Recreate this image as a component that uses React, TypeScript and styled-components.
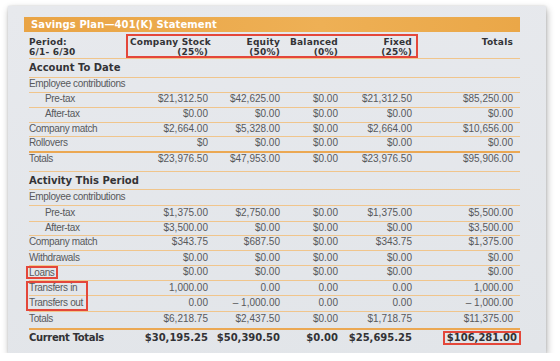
import React from "react";
import styled, { createGlobalStyle } from "styled-components";

const GlobalStyle = createGlobalStyle`
  html, body { margin: 0; padding: 0; background: #ffffff; }
  * { box-sizing: border-box; }
`;

const HEAVY = `"DejaVu Sans", "Liberation Sans", sans-serif`;
const PLAIN = `"Liberation Sans", Arial, sans-serif`;
const RED = "#e4473a";
const COLS = "101px 78px 72px 58px 74px 101px";

const Page = styled.div`
  padding: 6px 0 0 8px;
`;

const Card = styled.div`
  width: 538px;
  height: 347px;
  padding: 11px 26px 0 16px;
  background: linear-gradient(175deg, #e7e9ed 0%, #e2e5e9 100%);
  box-shadow: 1px 3px 7px rgba(0, 0, 0, 0.3), 0 0 2px rgba(0, 0, 0, 0.12);
`;

const TitleBar = styled.div`
  height: 15px;
  line-height: 15px;
  padding-left: 7px;
  background: linear-gradient(90deg, #e9a445 0%, #eeb055 60%, #eaa748 100%);
  color: #ffffff;
  font-family: ${HEAVY};
  font-weight: 700;
  font-size: 10px;
  letter-spacing: 0.1px;
  white-space: nowrap;
`;

const Table = styled.div`
  margin-left: 5px;
  width: 491px;
`;

const Header = styled.div`
  position: relative;
  display: grid;
  grid-template-columns: ${COLS};
  padding: 5px 0 1px;
  border-bottom: 1px solid #f0c58c;
  font-family: ${HEAVY};
  font-weight: 700;
  font-size: 9px;
  line-height: 10px;
  color: #333336;
`;

const HeadCell = styled.div<{ $left?: boolean }>`
  text-align: ${(p) => (p.$left ? "left" : "right")};
  white-space: nowrap;
  letter-spacing: 0.2px;
`;

const HeaderMark = styled.div`
  position: absolute;
  left: 97px;
  top: 2px;
  width: 292px;
  height: 24px;
  border: 2px solid ${RED};
`;

const Section = styled.div<{ $h: number }>`
  height: ${(p) => p.$h + 1}px;
  line-height: ${(p) => p.$h}px;
  border-bottom: 1px solid #f0c58c;
  font-family: ${HEAVY};
  font-weight: 700;
  font-size: 10px;
  color: #333336;
`;

const Row = styled.div<{ $h: number; $pt: number; $thick?: boolean }>`
  display: grid;
  grid-template-columns: ${COLS};
  align-items: start;
  height: ${(p) => p.$h + (p.$thick ? 2 : 1)}px;
  padding-top: ${(p) => p.$pt}px;
  border-bottom: ${(p) => (p.$thick ? "2px solid #eba853" : "1px solid #f0c58c")};
  font-family: ${PLAIN};
  font-size: 10px;
  line-height: 12px;
  color: #58595c;
`;

const Label = styled.div<{ $indent?: boolean }>`
  padding-left: ${(p) => (p.$indent ? 16 : 0)}px;
  white-space: nowrap;
  letter-spacing: -0.35px;
`;

const Num = styled.div`
  text-align: right;
  white-space: nowrap;
`;

const LabelMark = styled.span`
  display: inline-block;
  vertical-align: top;
  margin-left: -3px;
  padding: 0 1px;
  line-height: 9px;
  border: 2px solid ${RED};
`;

const Group = styled.div`
  position: relative;
`;

const GroupMark = styled.div`
  position: absolute;
  left: -3px;
  top: 0;
  width: 62px;
  height: 30px;
  border: 2px solid ${RED};
`;

const TotalRow = styled.div`
  display: grid;
  grid-template-columns: ${COLS};
  height: 16px;
  line-height: 16px;
  font-family: ${HEAVY};
  font-weight: 700;
  font-size: 10px;
  color: #323235;
`;

const TotalMark = styled.span`
  display: inline-block;
  margin-right: -8px;
  margin-top: 1px;
  padding: 0 2px;
  line-height: 10px;
  border: 2px solid ${RED};
`;

type Line = {
  label: string;
  vals?: string[];
  indent?: boolean;
  h: number;
  pt: number;
  thick?: boolean;
  mark?: boolean;
};

const toDate: Line[] = [
  { label: "Employee contributions", h: 14, pt: 0 },
  { label: "Pre-tax", indent: true, vals: ["$21,312.50", "$42,625.00", "$0.00", "$21,312.50", "$85,250.00"], h: 14, pt: 0 },
  { label: "After-tax", indent: true, vals: ["$0.00", "$0.00", "$0.00", "$0.00", "$0.00"], h: 14, pt: 0 },
  { label: "Company match", vals: ["$2,664.00", "$5,328.00", "$0.00", "$2,664.00", "$10,656.00"], h: 13, pt: 0 },
  { label: "Rollovers", vals: ["$0", "$0.00", "$0.00", "$0.00", "$0.00"], h: 14, pt: 0, thick: true },
  { label: "Totals", vals: ["$23,976.50", "$47,953.00", "$0.00", "$23,976.50", "$95,906.00"], h: 18, pt: 0 },
];

const period: Line[] = [
  { label: "Employee contributions", h: 15, pt: 1 },
  { label: "Pre-tax", indent: true, vals: ["$1,375.00", "$2,750.00", "$0.00", "$1,375.00", "$5,500.00"], h: 15, pt: 1 },
  { label: "After-tax", indent: true, vals: ["$3,500.00", "$0.00", "$0.00", "$0.00", "$3,500.00"], h: 13, pt: 0 },
  { label: "Company match", vals: ["$343.75", "$687.50", "$0.00", "$343.75", "$1,375.00"], h: 14, pt: 0 },
  { label: "Withdrawals", vals: ["$0.00", "$0.00", "$0.00", "$0.00", "$0.00"], h: 14, pt: 1 },
  { label: "Loans", vals: ["$0.00", "$0.00", "$0.00", "$0.00", "$0.00"], h: 14, pt: 0, mark: true },
];

const transfers: Line[] = [
  { label: "Transfers in", vals: ["1,000.00", "0.00", "0.00", "0.00", "1,000.00"], h: 14, pt: 1 },
  { label: "Transfers out", vals: ["0.00", "\u2013 1,000.00", "0.00", "0.00", "\u2013 1,000.00"], h: 15, pt: 1 },
];

const periodTotals: Line = {
  label: "Totals",
  vals: ["$6,218.75", "$2,437.50", "$0.00", "$1,718.75", "$11,375.00"],
  h: 16,
  pt: 1,
  thick: true,
};

function DataRow({ line }: { line: Line }) {
  return (
    <Row $h={line.h} $pt={line.pt} $thick={line.thick}>
      <Label $indent={line.indent}>
        {line.mark ? <LabelMark>{line.label}</LabelMark> : line.label}
      </Label>
      {(line.vals ?? []).map((v, i) => (
        <Num key={i}>{v}</Num>
      ))}
    </Row>
  );
}

const heads: [string, string][] = [
  ["Company Stock", "(25%)"],
  ["Equity", "(50%)"],
  ["Balanced", "(0%)"],
  ["Fixed", "(25%)"],
  ["Totals", ""],
];

const current = ["$30,195.25", "$50,390.50", "$0.00", "$25,695.25"];

export default function App() {
  return (
    <>
      <GlobalStyle />
      <Page>
        <Card>
          <TitleBar>Savings Plan—401(K) Statement</TitleBar>
          <Table>
            <Header>
              <HeadCell $left>
                Period:
                <br />
                6/1- 6/30
              </HeadCell>
              {heads.map(([a, b]) => (
                <HeadCell key={a}>
                  {a}
                  <br />
                  {b}
                </HeadCell>
              ))}
              <HeaderMark />
            </Header>
            <Section $h={18}>Account To Date</Section>
            {toDate.map((l, i) => (
              <DataRow key={i} line={l} />
            ))}
            <Section $h={17}>Activity This Period</Section>
            {period.map((l, i) => (
              <DataRow key={i} line={l} />
            ))}
            <Group>
              {transfers.map((l, i) => (
                <DataRow key={i} line={l} />
              ))}
              <GroupMark />
            </Group>
            <DataRow line={periodTotals} />
            <TotalRow>
              <Label>Current Totals</Label>
              {current.map((v) => (
                <Num key={v}>{v}</Num>
              ))}
              <Num>
                <TotalMark>$106,281.00</TotalMark>
              </Num>
            </TotalRow>
          </Table>
        </Card>
      </Page>
    </>
  );
}
